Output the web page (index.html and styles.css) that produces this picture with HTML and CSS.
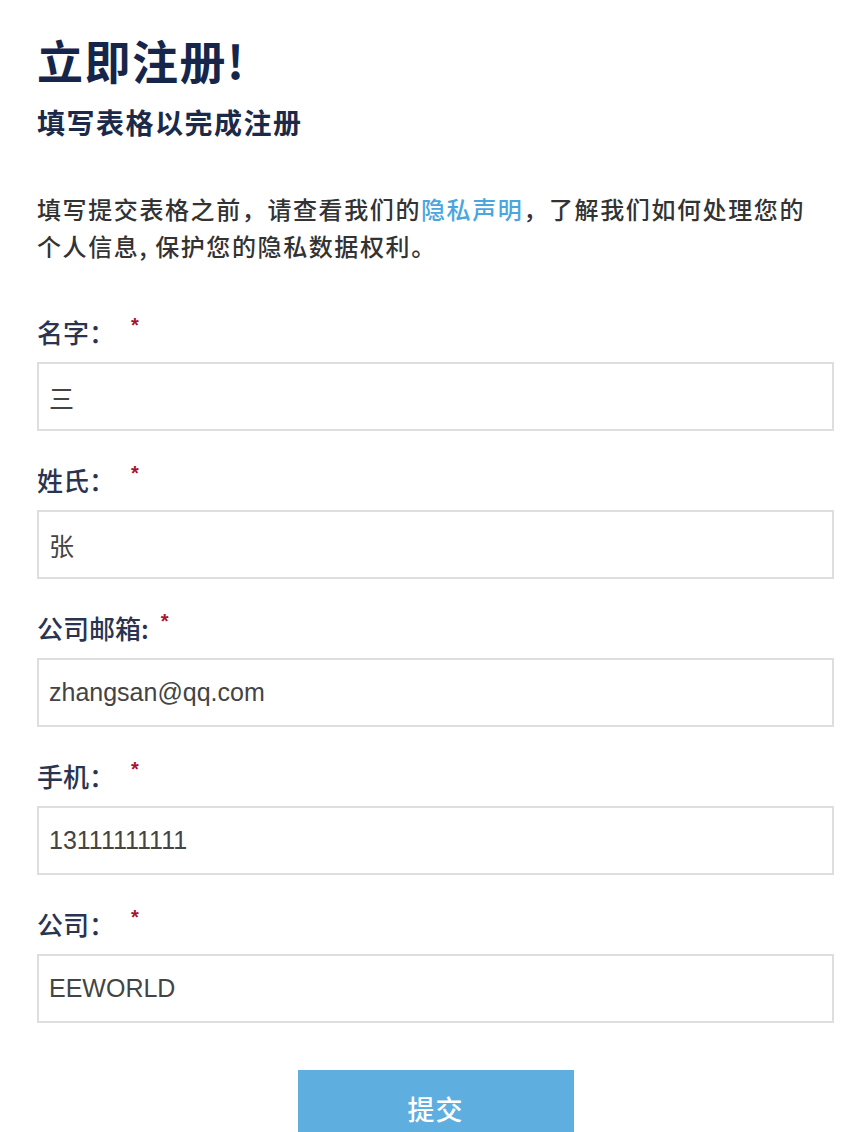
FILE: index.html
```html
<!DOCTYPE html>
<html lang="zh-CN">
<head>
    <meta charset="UTF-8">
    <meta name="viewport" content="width=device-width, initial-scale=1.0">
    <title>立即注册</title>
    <link rel="stylesheet" href="styles.css">
</head>
<body>
    <div id="content">
        <h1 class="title">立即注册!</h1>
        <h2 class="subtitle">填写表格以完成注册</h2>
        <p class="notice">填写提交表格之前，请查看我们的<a href="#">隐私声明</a>，了解我们如何处理您的<br>个人信息, 保护您的隐私数据权利。</p>

        <form class="reg_form">
            <div class="field">
                <label>名字：<span class="req">*</span></label>
                <input type="text" value="三">
            </div>
            <div class="field">
                <label>姓氏：<span class="req">*</span></label>
                <input type="text" value="张">
            </div>
            <div class="field">
                <label>公司邮箱:<span class="req narrow">*</span></label>
                <input type="text" value="zhangsan@qq.com">
            </div>
            <div class="field">
                <label>手机：<span class="req">*</span></label>
                <input type="text" value="13111111111">
            </div>
            <div class="field">
                <label>公司：<span class="req">*</span></label>
                <input type="text" value="EEWORLD">
            </div>
            <div class="submit_row">
                <button type="button" class="submit">提交</button>
            </div>
        </form>
    </div>
</body>
</html>
```

FILE: styles.css
```css
* {
    box-sizing: border-box;
}
body {
    margin: 0;
    background: #fff;
    font-family: "Noto Sans CJK SC", "Liberation Sans", sans-serif;
    overflow: hidden;
}
#content {
    padding: 31px 30px 0 37px;
}
.title {
    margin: 0 0 17px 0;
    font-size: 46px;
    line-height: 56px;
    font-weight: 700;
    color: #16264a;
    letter-spacing: 1.5px;
}
.subtitle {
    margin: 0 0 50px 0;
    font-size: 28px;
    line-height: 36px;
    font-weight: 700;
    color: #1c2a4a;
    letter-spacing: 1.5px;
}
.notice {
    margin: 0 0 50px 0;
    font-size: 24px;
    line-height: 37px;
    font-weight: 500;
    color: #333;
    letter-spacing: 1.6px;
}
.notice a {
    color: #4aa6e0;
    text-decoration: none;
}
.field {
    margin-bottom: 31px;
}
.field label {
    display: block;
    height: 36px;
    margin-bottom: 12px;
    font-size: 26px;
    line-height: 36px;
    font-weight: 500;
    color: #2a3450;
}
.req {
    display: inline-block;
    margin-left: 16px;
    color: #a8152b;
    font-family: "Liberation Sans", sans-serif;
    font-size: 20px;
    font-weight: 700;
    vertical-align: top;
    line-height: 22px;
}
.req.narrow {
    margin-left: 12px;
}
.field input {
    display: block;
    width: 100%;
    height: 69px;
    border: 2px solid #dedede;
    padding: 0 10px;
    font-family: "Liberation Sans", "Noto Sans CJK SC", sans-serif;
    font-size: 25px;
    color: #444;
    background: #fff;
    outline: none;
}
.submit_row {
    display: flex;
    justify-content: center;
    margin-top: 47px;
}
.submit {
    width: 276px;
    height: 76px;
    border: none;
    background: #5eaee0;
    color: #fff;
    font-family: "Noto Sans CJK SC", sans-serif;
    font-size: 27px;
    font-weight: 500;
    letter-spacing: 1px;
}
```
